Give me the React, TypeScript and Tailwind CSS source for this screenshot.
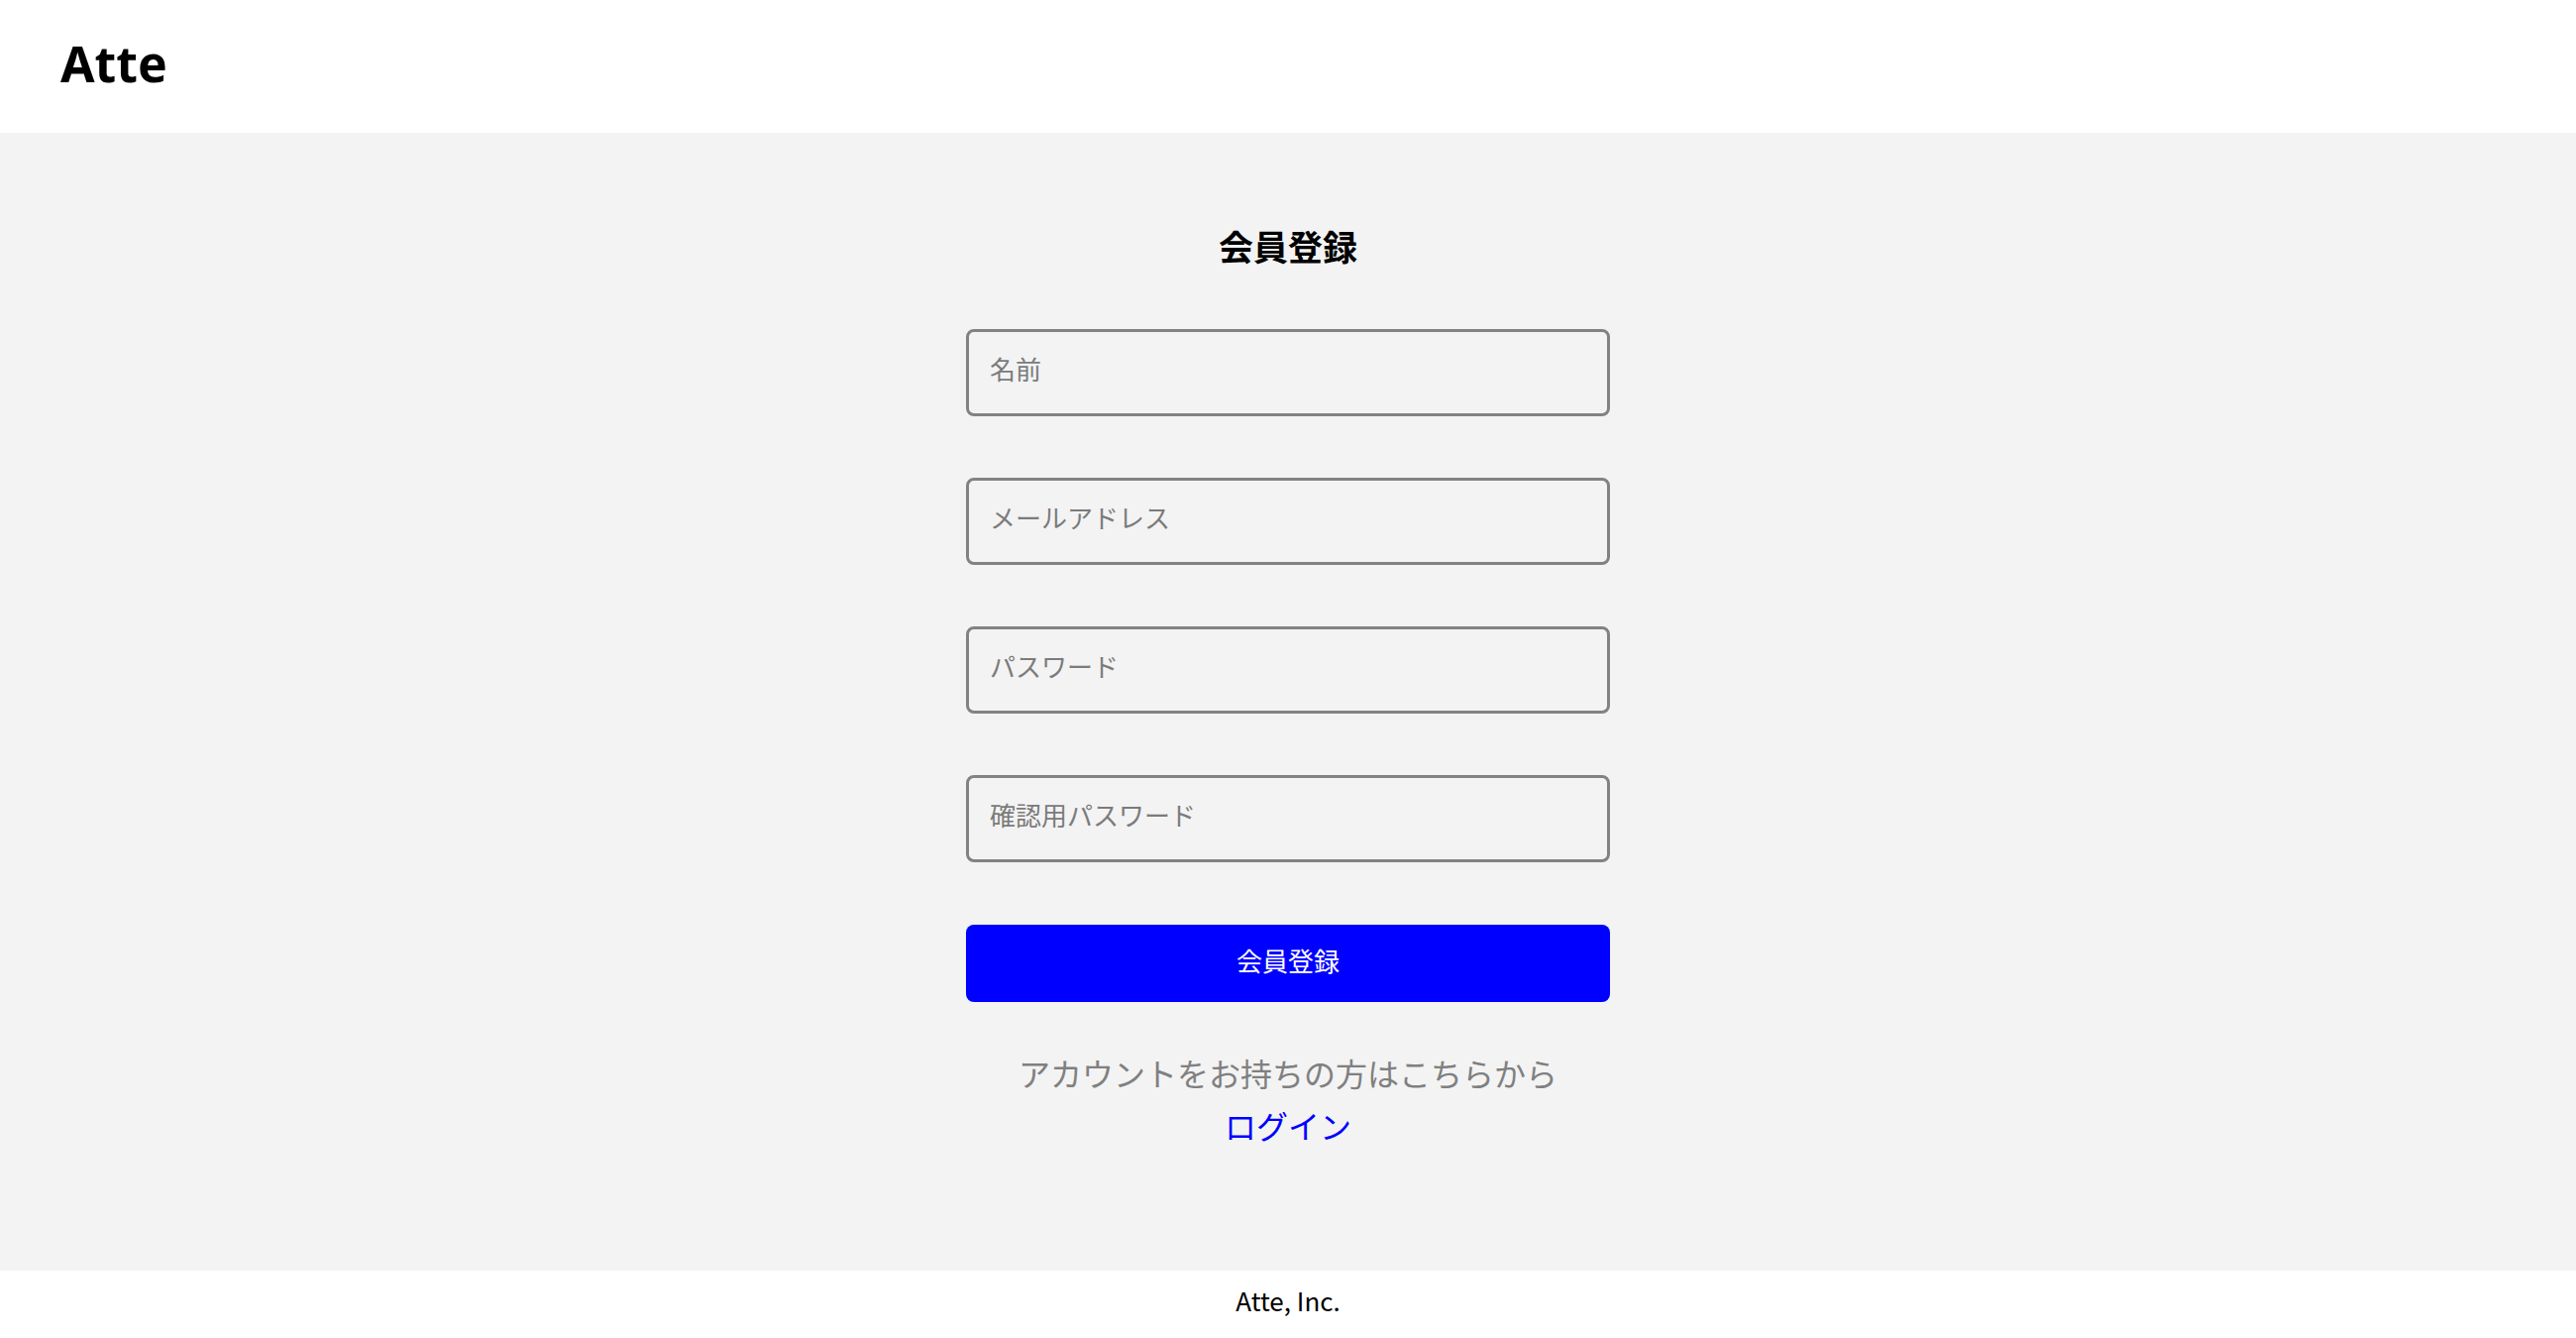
export default function App() {
  const jp = "font-['Noto_Sans_CJK_JP','Noto_Sans',sans-serif]";

  const fields = [
    { type: "text", placeholder: "名前" },
    { type: "email", placeholder: "メールアドレス" },
    { type: "password", placeholder: "パスワード" },
    { type: "password", placeholder: "確認用パスワード" },
  ];

  return (
    <div className={`flex min-h-screen flex-col bg-white ${jp}`}>
      {/* Header */}
      <header className="flex h-[134px] items-center bg-white px-[61px] pb-[7px]">
        <h1 className="font-['Noto_Sans',sans-serif] text-[50px] font-bold leading-none text-black">
          Atte
        </h1>
      </header>

      {/* Register form */}
      <main className="flex h-[1148px] flex-col items-center bg-[#f3f3f3] pt-[90px]">
        <h2 className="text-[35px] font-bold leading-[48px] text-black">会員登録</h2>

        <form className="mt-[60px] flex w-[650px] flex-col gap-[62px]">
          {fields.map((f) => (
            <input
              key={f.placeholder}
              type={f.type}
              placeholder={f.placeholder}
              className="h-[88px] w-full rounded-[8px] border-[3px] border-[#828282] bg-transparent px-[21px] pb-[9px] text-[26px] text-black outline-none placeholder:text-[#7b7b7b]"
            />
          ))}
          <button
            type="button"
            className="mt-px h-[78px] w-full rounded-[8px] bg-[#0000ff] pb-[8px] text-[26px] text-white"
          >
            会員登録
          </button>
        </form>

        <div className="mt-[45px] flex flex-col items-center">
          <p className="text-[32px] leading-[53px] text-[#808080]">
            アカウントをお持ちの方はこちらから
          </p>
          <a href="#" className="text-[32px] leading-[53px] text-[#0000ff]">
            ログイン
          </a>
        </div>
      </main>

      {/* Footer */}
      <footer className="flex h-[68px] items-center justify-center bg-white pb-[9px]">
        <small className="text-[26px] text-black">Atte, Inc.</small>
      </footer>
    </div>
  );
}
